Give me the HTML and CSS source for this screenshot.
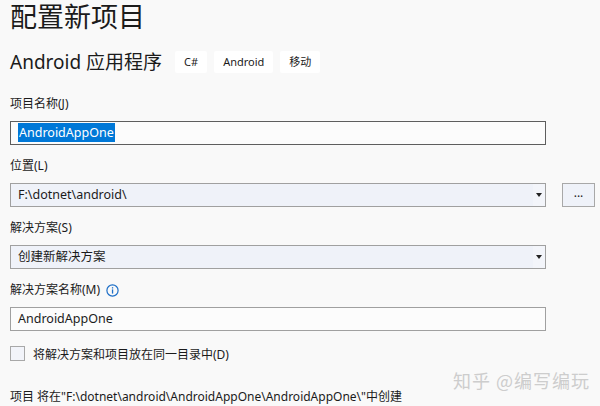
FILE: index.html
```html
<!DOCTYPE html>
<html lang="zh-CN">
<head>
<meta charset="utf-8">
<link rel="stylesheet" href="styles.css">
</head>
<body>
<div class="page">
  <h1 class="title">配置新项目</h1>
  <div class="heading">
    <span class="heading-text">Android 应用程序</span>
    <span class="tag">C#</span>
    <span class="tag">Android</span>
    <span class="tag">移动</span>
  </div>

  <div class="field first">
    <div class="label">项目名称(J)</div>
    <div class="input focused"><span class="sel">AndroidAppOne</span></div>
  </div>

  <div class="field">
    <div class="label">位置(L)</div>
    <div class="row">
      <div class="combo"><span class="combo-text">F:\dotnet\android\</span><span class="arrow"></span></div>
      <div class="btn">...</div>
    </div>
  </div>

  <div class="field">
    <div class="label">解决方案(S)</div>
    <div class="combo"><span class="combo-text">创建新解决方案</span><span class="arrow"></span></div>
  </div>

  <div class="field">
    <div class="label">解决方案名称(M)
      <svg class="info" width="13" height="13" viewBox="0 0 13 13"><circle cx="6.5" cy="6.5" r="5.6" fill="none" stroke="#1e6fc7" stroke-width="1.2"/><rect x="5.9" y="5.4" width="1.3" height="4.2" fill="#1e6fc7"/><rect x="5.9" y="3.2" width="1.3" height="1.3" fill="#1e6fc7"/></svg>
    </div>
    <div class="input">AndroidAppOne</div>
  </div>

  <div class="check-row">
    <span class="checkbox"></span>
    <span class="check-label">将解决方案和项目放在同一目录中(D)</span>
  </div>

  <div class="note">项目 将在"F:\dotnet\android\AndroidAppOne\AndroidAppOne\"中创建</div>

  <div class="watermark">知乎 @编写编玩</div>
</div>
</body>
</html>
```

FILE: styles.css
```css
html, body {
  margin: 0;
  padding: 0;
  background: #f9f9f9;
}
body {
  font-family: "Noto Sans", "Noto Sans CJK SC", sans-serif;
  color: #1b1b1b;
  width: 600px;
  height: 406px;
  overflow: hidden;
}
.page {
  position: relative;
  padding-left: 10px;
  height: 406px;
}
.title {
  margin: 0;
  font-size: 27px;
  font-weight: 400;
  line-height: 32px;
  font-family: "Noto Sans CJK SC", sans-serif;
}
.heading {
  display: flex;
  align-items: center;
  height: 22px;
  margin-top: 19px;
}
.heading-text {
  font-size: 19px;
  line-height: 22px;
  margin-right: 13px;
}
.tag {
  font-size: 11px;
  line-height: 22px;
  height: 22px;
  background: #ffffff;
  padding: 0 9px;
  margin-right: 7px;
  border-radius: 2px;
}
.field {
  margin-bottom: 12px;
}
.field.first {
  margin-top: 22px;
}
.label {
  font-size: 12px;
  line-height: 18px;
  height: 18px;
  margin-bottom: 8px;
  display: flex;
  align-items: center;
}
.info {
  margin-left: 6px;
}
.input {
  box-sizing: border-box;
  width: 536px;
  height: 24px;
  border: 1px solid #a0a0a0;
  background: #fcfcfc;
  font-size: 12.5px;
  line-height: 22px;
  padding-left: 7px;
}
.input.focused {
  border-color: #5e5e5e;
}
.sel {
  background: #0078d7;
  color: #fff;
  display: inline-block;
  line-height: 19px;
  padding: 0 1px;
  margin-top: 1px;
  vertical-align: top;
}
.row {
  display: flex;
  gap: 16px;
}
.combo {
  box-sizing: border-box;
  width: 536px;
  height: 24px;
  border: 1px solid #a0a0a0;
  background: #eff2f9;
  font-size: 12.5px;
  line-height: 22px;
  display: flex;
  justify-content: space-between;
}
.combo-text {
  padding-left: 7px;
}
.arrow {
  width: 12px;
  height: 22px;
  background: #f3f5fa;
  position: relative;
}
.arrow::after {
  content: "";
  position: absolute;
  left: 3px;
  top: 9px;
  border-left: 3px solid transparent;
  border-right: 3px solid transparent;
  border-top: 4px solid #222;
}
.btn {
  box-sizing: border-box;
  width: 33px;
  height: 24px;
  border: 1px solid #a8a8a8;
  background: #eff2f9;
  font-size: 12px;
  line-height: 18px;
  text-align: center;
}
.check-row {
  display: flex;
  align-items: center;
  margin-top: 14px;
  height: 17px;
}
.checkbox {
  box-sizing: border-box;
  width: 15px;
  height: 15px;
  border: 1px solid #a8a8a8;
  background: #f2f4fa;
  margin-right: 8px;
}
.check-label {
  font-size: 12px;
}
.note {
  margin-top: 26px;
  font-size: 12px;
  line-height: 18px;
}
.watermark {
  position: absolute;
  left: 453px;
  top: 367px;
  font-size: 18px;
  letter-spacing: 1px;
  color: #cdcdcd;
  font-family: "Noto Sans CJK SC", sans-serif;
}
```
